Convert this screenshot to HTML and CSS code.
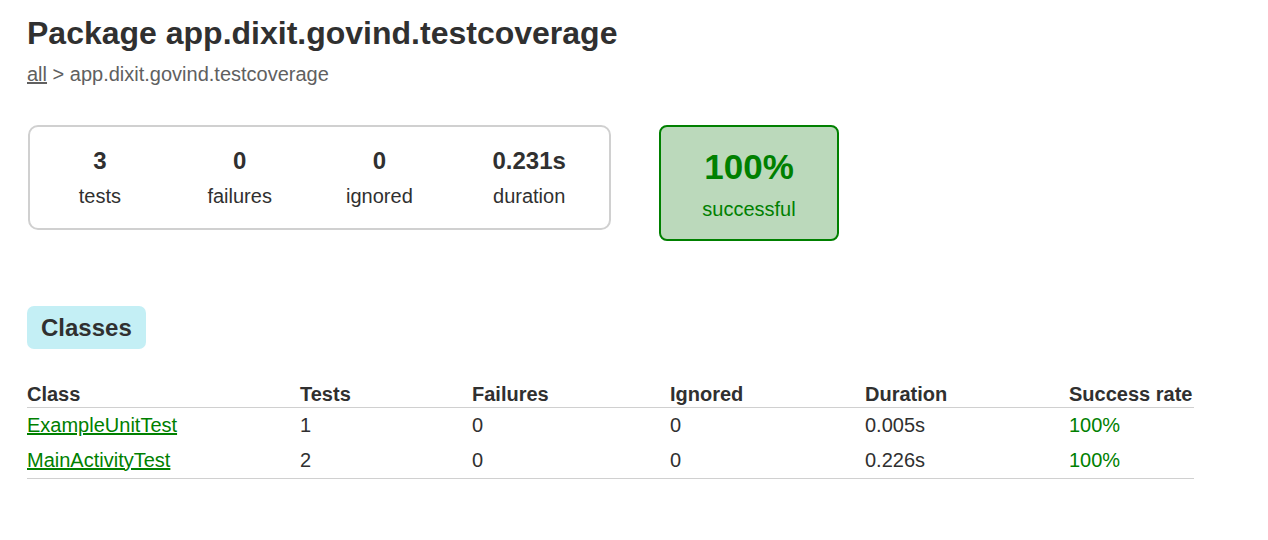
FILE: index.html
```html
<!DOCTYPE html>
<html>
<head>
<meta charset="utf-8">
<link rel="stylesheet" href="styles.css">
</head>
<body>
<div class="content">
  <h1 class="title">Package app.dixit.govind.testcoverage</h1>
  <div class="breadcrumbs"><a href="#">all</a> &gt; app.dixit.govind.testcoverage</div>
  <div class="summary">
    <div class="summary-group">
      <div class="info-box"><div class="counter">3</div><div class="label">tests</div></div>
      <div class="info-box"><div class="counter">0</div><div class="label">failures</div></div>
      <div class="info-box"><div class="counter">0</div><div class="label">ignored</div></div>
      <div class="info-box duration"><div class="counter">0.231s</div><div class="label">duration</div></div>
    </div>
    <div class="success-rate">
      <div class="percent">100%</div>
      <div class="label">successful</div>
    </div>
  </div>
  <div class="tabs"><span class="tab">Classes</span></div>
  <table class="classes">
    <thead>
      <tr><th class="c1">Class</th><th class="c2">Tests</th><th class="c3">Failures</th><th class="c4">Ignored</th><th class="c5">Duration</th><th class="c6">Success rate</th></tr>
    </thead>
    <tbody>
      <tr><td><a class="ok" href="#">ExampleUnitTest</a></td><td>1</td><td>0</td><td>0</td><td>0.005s</td><td class="ok">100%</td></tr>
      <tr><td><a class="ok" href="#">MainActivityTest</a></td><td>2</td><td>0</td><td>0</td><td>0.226s</td><td class="ok">100%</td></tr>
    </tbody>
  </table>
</div>
</body>
</html>
```

FILE: styles.css
```css
html, body {
  margin: 0;
  padding: 0;
  background: #ffffff;
}
body {
  font-family: "Liberation Sans", Arial, sans-serif;
  font-size: 20px;
  color: #303030;
}
.content {
  padding: 15px 27px;
}
.title {
  font-size: 32px;
  font-weight: bold;
  line-height: 36px;
  margin: 0 0 11px 0;
  color: #303030;
}
.breadcrumbs {
  color: #606060;
  line-height: 24px;
}
.breadcrumbs a {
  color: #606060;
}
.summary {
  display: flex;
  align-items: flex-start;
  margin-top: 39px;
}
.summary-group {
  display: flex;
  border: 2px solid #d0d0d0;
  border-radius: 10px;
  width: 579px;
  padding: 20px 0 20px 0;
  margin-left: 1px;
}
.info-box {
  width: 140px;
  text-align: center;
}
.info-box.duration {
  width: 160px;
}
.counter {
  font-weight: bold;
  font-size: 24px;
  line-height: 28px;
  margin-bottom: 9px;
}
.label {
  line-height: 24px;
}
.success-rate {
  width: 176px;
  margin-left: 48px;
  border: 2px solid #008000;
  border-radius: 8px;
  background: #bbd9bb;
  color: #008000;
  text-align: center;
  padding: 20px 0 18px 0;
}
.percent {
  font-weight: bold;
  font-size: 35px;
  line-height: 40px;
  margin-bottom: 10px;
}
.tabs {
  margin-top: 65px;
  line-height: 0;
}
.tab {
  display: inline-block;
  background: #c4eff5;
  border-radius: 7px;
  padding: 8px 14px 7px 14px;
  font-weight: bold;
  font-size: 24px;
  line-height: 28px;
}
.classes {
  border-collapse: collapse;
  margin-top: 33px;
  width: 1167px;
}
.classes th, .classes td {
  text-align: left;
  padding: 0;
  font-size: 20px;
}
.classes th {
  font-weight: bold;
  line-height: 24px;
  padding-bottom: 1px;
  border-bottom: 1px solid #d0d0d0;
}
.classes td {
  height: 33px;
  padding-bottom: 2px;
  line-height: 24px;
}
.classes tbody tr:last-child td {
  border-bottom: 1px solid #d0d0d0;
}
.c1 { width: 273px; }
.c2 { width: 172px; }
.c3 { width: 198px; }
.c4 { width: 195px; }
.c5 { width: 204px; }
.ok, a.ok {
  color: #008000;
}
```
